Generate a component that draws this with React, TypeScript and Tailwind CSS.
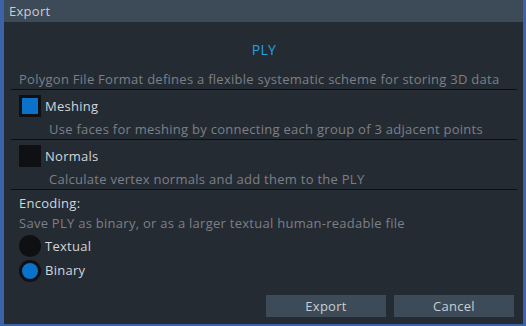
import React from 'react';

const font = { fontFamily: '"Open Sans", "Liberation Sans", sans-serif' };

const Check: React.FC<{ on?: boolean }> = ({ on }) => (
  <div className="w-[22px] h-[22px] bg-[#0e1013] p-[3px] shrink-0">
    {on && <div className="w-full h-full bg-[#0a72c9]" />}
  </div>
);

const Radio: React.FC<{ on?: boolean }> = ({ on }) => (
  <div className="w-[22px] h-[22px] rounded-full bg-[#0e1013] p-[3px] shrink-0">
    {on && <div className="w-full h-full rounded-full bg-[#0a72c9]" />}
  </div>
);

export default function App() {
  return (
    <div className="w-[526px] h-[326px] bg-[#3c62a8] pl-[4px] pr-[3px] pb-[2px] text-[13px] leading-none tracking-[0.27px]" style={font}>
      <div className="h-full flex flex-col bg-[#252b33]">
        {/* title bar */}
        <div className="h-[22px] bg-[#3d4a57] flex items-center pl-[5px] text-[#c9ced3] shrink-0">Export</div>

        <div className="flex flex-col px-[7px] pr-[6px]">
          <div className="h-[18px] mt-[19px] flex items-center justify-center text-[#1fa3e6] text-[14px]">PLY</div>
          <div className="h-[31px] flex items-center pl-[8px] pt-[11px] text-[#7b8087] border-b border-[#0c0e11]">
            Polygon File Format defines a flexible systematic scheme for storing 3D data
          </div>

          <div className="h-[27px] flex items-center gap-[4px] pl-[8px] pt-[5px] text-[#d2d6da]">
            <Check on />
            <span>Meshing</span>
          </div>
          <div className="h-[23px] flex items-center pl-[38px] pt-[3px] text-[#7b8087] border-b border-[#0c0e11]">
            Use faces for meshing by connecting each group of 3 adjacent points
          </div>

          <div className="h-[27px] flex items-center gap-[4px] pl-[8px] pt-[5px] text-[#d2d6da]">
            <Check />
            <span>Normals</span>
          </div>
          <div className="h-[23px] flex items-center pl-[38px] pt-[3px] text-[#7b8087] border-b border-[#0c0e11]">
            Calculate vertex normals and add them to the PLY
          </div>

          <div className="h-[24px] flex items-center pl-[8px] pt-[2px] text-[#d2d6da]">Encoding:</div>
          <div className="h-[18px] flex items-center pl-[8px] text-[#7b8087]">
            Save PLY as binary, or as a larger textual human-readable file
          </div>
          <div className="h-[25px] flex items-center gap-[4px] pl-[8px] pt-[3px] text-[#d2d6da]">
            <Radio />
            <span>Textual</span>
          </div>
          <div className="h-[25px] flex items-center gap-[4px] pl-[8px] pt-[2px] text-[#d2d6da]">
            <Radio on />
            <span>Binary</span>
          </div>

          <div className="flex justify-end gap-[8px] mt-[13px] pr-[3px]">
            <button className="w-[120px] h-[22px] bg-[#3d4a57] text-[#c9ced3] flex items-center justify-center">Export</button>
            <button className="w-[120px] h-[22px] bg-[#3d4a57] text-[#c9ced3] flex items-center justify-center">Cancel</button>
          </div>
        </div>
      </div>
    </div>
  );
}
